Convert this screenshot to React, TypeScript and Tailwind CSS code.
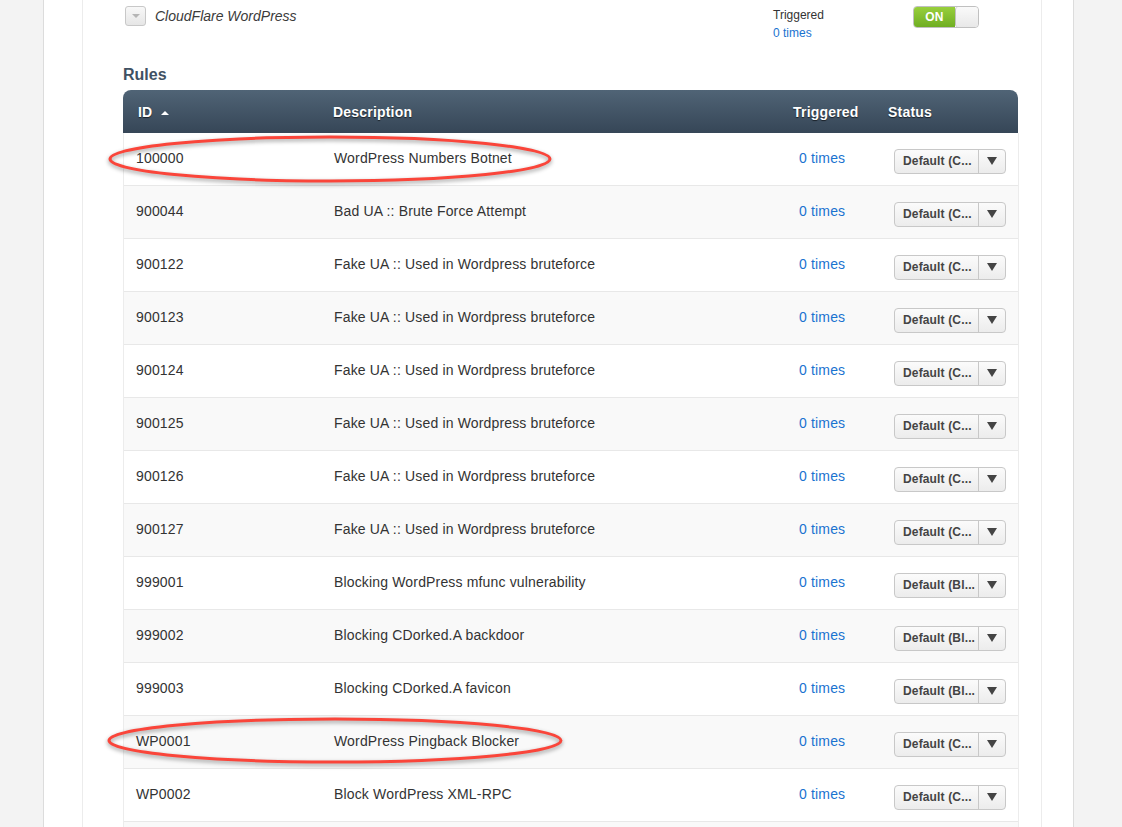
import { Fragment } from "react";

const rules = [
  { id: "100000", description: "WordPress Numbers Botnet", status: "Default (C..." },
  { id: "900044", description: "Bad UA :: Brute Force Attempt", status: "Default (C..." },
  { id: "900122", description: "Fake UA :: Used in Wordpress bruteforce", status: "Default (C..." },
  { id: "900123", description: "Fake UA :: Used in Wordpress bruteforce", status: "Default (C..." },
  { id: "900124", description: "Fake UA :: Used in Wordpress bruteforce", status: "Default (C..." },
  { id: "900125", description: "Fake UA :: Used in Wordpress bruteforce", status: "Default (C..." },
  { id: "900126", description: "Fake UA :: Used in Wordpress bruteforce", status: "Default (C..." },
  { id: "900127", description: "Fake UA :: Used in Wordpress bruteforce", status: "Default (C..." },
  { id: "999001", description: "Blocking WordPress mfunc vulnerability", status: "Default (Bl..." },
  { id: "999002", description: "Blocking CDorked.A backdoor", status: "Default (Bl..." },
  { id: "999003", description: "Blocking CDorked.A favicon", status: "Default (Bl..." },
  { id: "WP0001", description: "WordPress Pingback Blocker", status: "Default (C..." },
  { id: "WP0002", description: "Block WordPress XML-RPC", status: "Default (C..." },
];

const Oval = ({ className, width, height }: { className: string; width: number; height: number }) => (
  <svg
    className={`pointer-events-none absolute drop-shadow-[0_2px_2px_rgba(0,0,0,0.4)] ${className}`}
    width={width}
    height={height}
    viewBox={`0 0 ${width} ${height}`}
    fill="none"
  >
    <ellipse cx={width / 2} cy={height / 2} rx={width / 2 - 2} ry={height / 2 - 2} stroke="#fa453a" strokeWidth="3" />
  </svg>
);

const StatusSelect = ({ label }: { label: string }) => (
  <div className="flex h-[25px] w-[112px] rounded-[4px] border border-[#c8c8c8] bg-gradient-to-b from-[#fbfbfb] to-[#ececec] text-[12px] font-bold tracking-[0.15px] text-[#444]">
    <div className="flex flex-1 items-center pl-[8px] whitespace-nowrap">{label}</div>
    <div className="flex w-[27px] items-center justify-center border-l border-[#c8c8c8]">
      <span className="h-0 w-0 border-x-[5px] border-t-[8px] border-x-transparent border-t-[#444]" />
    </div>
  </div>
);

export default function App() {
  return (
    <div className="relative h-[827px] w-[1122px] overflow-hidden bg-[#f3f3f3] font-['Liberation_Sans',Arial,sans-serif] text-[14px] tracking-[0.16px] text-[#333]">
      <div className="mx-[43px] h-full w-[1031px] border-x border-[#dcdcdc] bg-white">
        <div className="ml-[38px] h-full w-[960px] border-x border-[#ececec] pl-[40px]">
          <div className="flex h-[64px]">
            <div className="mt-[6px] ml-[2px] flex h-[20px] w-[21px] items-center justify-center rounded-[3px] border border-[#c8c8c8] bg-gradient-to-b from-[#f8f8f8] to-[#e6e6e6]">
              <span className="h-0 w-0 border-x-[4px] border-t-[4px] border-x-transparent border-t-[#b5b5b5]" />
            </div>
            <div className="mt-[6px] ml-[9px] w-[618px] tracking-normal italic text-[#3b3b3b]">CloudFlare WordPress</div>
            <div className="mt-[6px] w-[140px] text-[12px] leading-[18px] tracking-normal">
              <div>Triggered</div>
              <div className="text-[#1a73d0]">0 times</div>
            </div>
            <div className="mt-[6px] flex h-[22px] w-[66px] overflow-hidden rounded-[4px] border border-[#c0c0c0]">
              <div className="flex w-[41px] items-center justify-center bg-gradient-to-b from-[#98cf3c] to-[#6fae22] text-[12px] font-bold text-white">
                ON
              </div>
              <div className="flex-1 rounded-[3px] border-l border-[#c0c0c0] bg-gradient-to-b from-[#fafafa] to-[#e8e8e8]" />
            </div>
          </div>
          <h2 className="h-[26px] pt-[1px] text-[16px] leading-[20px] font-bold tracking-normal text-[#3f5163]">Rules</h2>
          <div className="w-[896px]">
            <div className="flex h-[43px] w-[895px] items-center rounded-t-[8px] bg-gradient-to-b from-[#506476] to-[#364657] pt-[2px] font-bold tracking-[0.2px] text-white [text-shadow:0_1px_1px_rgba(0,0,0,0.6)]">
              <div className="flex w-[210px] items-center gap-[9px] pl-[15px]">
                ID
                <span className="h-0 w-0 border-x-[4px] border-b-[4px] border-x-transparent border-b-white" />
              </div>
              <div className="w-[460px]">Description</div>
              <div className="w-[95px]">Triggered</div>
              <div>Status</div>
            </div>
            <div className="border-x border-[#ececec]">
              {rules.map((rule, i) => (
                <Fragment key={rule.id}>
                  <div
                    className={`flex h-[53px] items-center border-b border-[#e8e8e8] pb-[2px] ${i % 2 === 1 ? "bg-[#f9f9f9]" : "bg-white"}`}
                  >
                    <div className="w-[210px] pl-[12px]">{rule.id}</div>
                    <div className="w-[465px]">{rule.description}</div>
                    <div className="w-[95px] text-[#1a73d0]">0 times</div>
                    <div className="mt-[6px]">
                      <StatusSelect label={rule.status} />
                    </div>
                  </div>
                </Fragment>
              ))}
              <div className="h-[53px] bg-[#f9f9f9]" />
            </div>
          </div>
        </div>
      </div>
      <Oval className="top-[135px] left-[108px]" width={444} height={48} />
      <Oval className="top-[717px] left-[107px]" width={456} height={47} />
    </div>
  );
}
